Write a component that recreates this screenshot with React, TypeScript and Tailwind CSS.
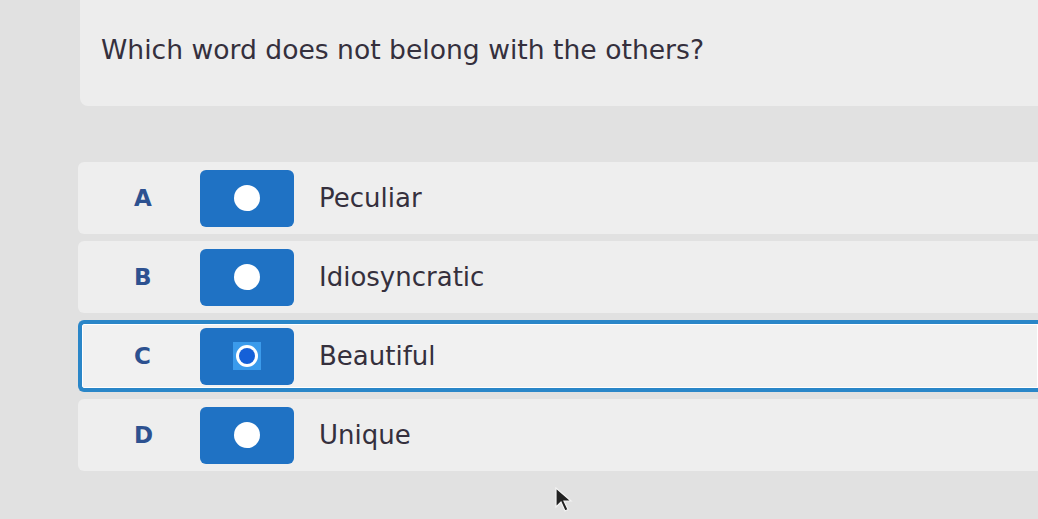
import React from "react";

const options = [
  { letter: "A", text: "Peculiar", selected: false },
  { letter: "B", text: "Idiosyncratic", selected: false },
  { letter: "C", text: "Beautiful", selected: true },
  { letter: "D", text: "Unique", selected: false },
];

function Radio({ selected }: { selected: boolean }) {
  return (
    <div className="w-[94px] h-[57px] shrink-0 rounded-md bg-[#1f72c4] flex items-center justify-center">
      {selected ? (
        <div className="w-[28px] h-[28px] bg-[#3b9bec] flex items-center justify-center">
          <div className="w-[22px] h-[22px] rounded-full bg-white flex items-center justify-center">
            <div className="w-[16px] h-[16px] rounded-full bg-[#1560d8]" />
          </div>
        </div>
      ) : (
        <div className="w-[26px] h-[26px] rounded-full bg-white" />
      )}
    </div>
  );
}

export default function App() {
  return (
    <div
      className="relative w-[1038px] h-[519px] overflow-hidden bg-[#e1e1e1]"
      style={{ fontFamily: '"DejaVu Sans", Verdana, sans-serif' }}
    >
      {/* Question */}
      <div className="ml-[80px] h-[106px] bg-[#ededed] rounded-bl-lg pl-[21px] pt-[32px]">
        <h1 className="text-[26.6px] leading-[36px] text-[#35303d]">
          Which word does not belong with the others?
        </h1>
      </div>

      {/* Options */}
      <div className="mt-[56px] ml-[78px] flex flex-col gap-[7px]">
        {options.map((o) => (
          <div
            key={o.letter}
            className={
              o.selected
                ? "h-[72px] flex items-center rounded-l-md border-[4px] border-r-0 border-[#2a86c8] bg-[#f1f1f1] shadow-[inset_0_0_0_1px_#ffffff]"
                : "h-[72px] flex items-center rounded-l-md bg-[#eeeeee]"
            }
          >
            <div
              className={
                o.selected
                  ? "w-[118px] pl-[52px] text-[23px] font-bold text-[#2d5190]"
                  : "w-[122px] pl-[56px] text-[23px] font-bold text-[#2d5190]"
              }
            >
              {o.letter}
            </div>
            <Radio selected={o.selected} />
            <div className="ml-[25px] text-[26px] text-[#35303d]">{o.text}</div>
          </div>
        ))}
      </div>

      {/* Mouse cursor */}
      <svg
        className="absolute left-[555px] top-[487px]"
        width="18"
        height="26"
        viewBox="0 0 18 26"
      >
        <path
          d="M1 1 L1 20 L6 15 L10 24 L13 22.5 L9 14 L16 14 Z"
          fill="#222"
          stroke="#f4f4f4"
          strokeWidth="1.2"
        />
      </svg>
    </div>
  );
}
